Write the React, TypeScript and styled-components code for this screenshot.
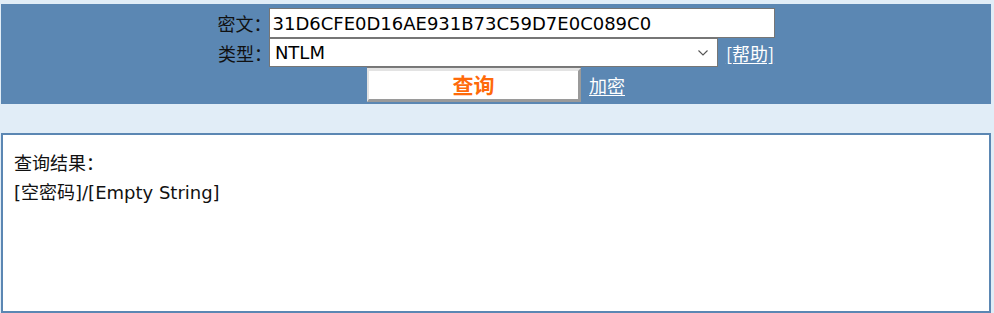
import styled, { createGlobalStyle } from "styled-components";

const GlobalStyle = createGlobalStyle`
  html, body {
    margin: 0;
    padding: 0;
  }
  body {
    background: #e1edf7;
    font-family: "DejaVu Sans", "Noto Sans CJK SC", sans-serif;
    font-size: 16px;
    color: #000;
  }
`;

const Page = styled.div`
  padding: 4px 3px 0 1px;
  display: flex;
  flex-direction: column;
  gap: 29px;
`;

const Header = styled.div`
  background: #5b87b3;
  height: 100px;
  box-sizing: border-box;
  padding-top: 4px;
  display: flex;
  flex-direction: column;
`;

const Row = styled.div<{ $h: number; $gap?: number }>`
  display: flex;
  justify-content: center;
  align-items: center;
  height: ${(p) => p.$h}px;
  gap: ${(p) => p.$gap ?? 0}px;
`;

const Label = styled.span`
  font-family: "Noto Sans CJK SC", sans-serif;
  font-size: 18px;
  color: #111;
  line-height: 1;
  margin-right: -3px;
`;

const TextInput = styled.input`
  width: 506px;
  height: 30px;
  box-sizing: border-box;
  border: 1px solid #767676;
  padding: 0 3px;
  font-family: "DejaVu Sans", sans-serif;
  font-size: 18px;
  color: #000;
  outline: none;
  background: #fff;
`;

const SelectWrap = styled.div`
  position: relative;
  display: flex;
`;

const Select = styled.select`
  appearance: none;
  width: 449px;
  height: 29px;
  box-sizing: border-box;
  border: 1px solid #767676;
  border-radius: 0;
  padding: 0 5px;
  font-family: "DejaVu Sans", sans-serif;
  font-size: 18px;
  color: #000;
  background: #fff;
  outline: none;
`;

const Chevron = styled.svg`
  position: absolute;
  right: 10px;
  top: 12px;
  pointer-events: none;
`;

const HeadLink = styled.a`
  font-family: "Noto Sans CJK SC", sans-serif;
  font-size: 18px;
  color: #fff;
  text-decoration: underline;
  text-underline-offset: 2px;
  line-height: 1;
`;

const SubmitButton = styled.button`
  width: 214px;
  height: 34px;
  box-sizing: border-box;
  border-style: solid;
  border-width: 3px 3px 3px 2px;
  border-color: #e3e3e3 #9a9a9a #9a9a9a #e3e3e3;
  box-shadow: 0 -1px 0 #7a7a7a;
  background: #fff;
  color: #ff6a0a;
  font-family: "Noto Sans CJK SC", sans-serif;
  font-weight: 700;
  font-size: 21px;
  line-height: 1;
  padding: 0;
`;

const ResultBox = styled.div`
  height: 180px;
  box-sizing: border-box;
  border: 2px solid #5b87b3;
  background: #fff;
  padding: 14px 11px;
  font-family: "DejaVu Sans", "Noto Sans CJK SC", sans-serif;
  font-size: 18px;
  line-height: 29px;
  color: #111;
`;

const ResultLine = styled.div``;

export default function App() {
  return (
    <>
      <GlobalStyle />
      <Page>
        <Header>
          <Row $h={30}>
            <Label>密文：</Label>
            <TextInput defaultValue="31D6CFE0D16AE931B73C59D7E0C089C0" />
          </Row>
          <Row $h={29} $gap={8}>
            <Row $h={29}>
              <Label>类型：</Label>
              <SelectWrap>
                <Select defaultValue="NTLM">
                  <option value="NTLM">NTLM</option>
                  <option value="MD5">MD5</option>
                  <option value="SHA1">SHA1</option>
                </Select>
                <Chevron width="10" height="6" viewBox="0 0 10 6">
                  <path d="M0.5 0.5 L5 5 L9.5 0.5" fill="none" stroke="#555" strokeWidth="1.1" />
                </Chevron>
              </SelectWrap>
            </Row>
            <HeadLink href="#">[帮助]</HeadLink>
          </Row>
          <Row $h={35} $gap={8}>
            <SubmitButton>查询</SubmitButton>
            <HeadLink href="#">加密</HeadLink>
          </Row>
        </Header>
        <ResultBox>
          <ResultLine>查询结果：</ResultLine>
          <ResultLine>[空密码]/[Empty String]</ResultLine>
        </ResultBox>
      </Page>
    </>
  );
}
